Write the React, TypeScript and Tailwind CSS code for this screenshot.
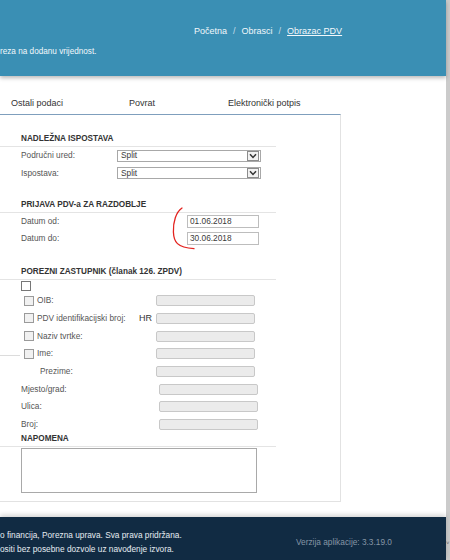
import type { ReactNode } from "react";

function SectionTitle({ children, className = "" }: { children: ReactNode; className?: string }) {
  return (
    <div
      className={`w-[277px] border-b border-[#e4e4e4] pl-[22px] text-[8.2px] font-bold text-[#333] ${className}`}
    >
      {children}
    </div>
  );
}

function SelectBox({ value }: { value: string }) {
  return (
    <div className="flex h-[12px] w-[144px] items-center border border-[#a8a8a8] bg-white pl-[3px] text-[8.3px] leading-none text-[#3a3a3a]">
      <span className="flex-1">{value}</span>
      <span className="mr-px flex h-[10px] w-[12px] items-center justify-center border border-[#8c8c8c] bg-[#f2f2f2]">
        <svg width="8" height="6" viewBox="0 0 8 6">
          <path d="M1 1.2 L4 4.4 L7 1.2" fill="none" stroke="#333" strokeWidth="1.5" />
        </svg>
      </span>
    </div>
  );
}

function TextBox({ value }: { value: string }) {
  return (
    <div className="flex h-[13px] w-[72px] items-center border border-[#bdbdbd] bg-white pl-[2px] text-[8.3px] leading-none text-[#3a3a3a]">
      {value}
    </div>
  );
}

function Disabled({ className = "" }: { className?: string }) {
  return <div className={`h-[11px] w-[99px] rounded-[2px] border border-[#c8c8c8] bg-[#ebebeb] ${className}`} />;
}

function Check({ light = true }: { light?: boolean }) {
  return (
    <span
      className={`block h-[10px] w-[10px] shrink-0 border ${
        light ? "border-[#9a9a9a] bg-[#f1f1f1]" : "border-[#777] bg-white"
      }`}
    />
  );
}

function CheckRow({ label, h, hr = false }: { label: string; h: string; hr?: boolean }) {
  return (
    <div className={`flex items-center pl-[25px] ${h}`}>
      <Check />
      <div className="ml-[3px] flex w-[119px] items-center">
        <span className="flex-1">{label}</span>
        {hr && <span className="mr-[4px] text-[9px] text-[#333]">HR</span>}
      </div>
      <Disabled />
    </div>
  );
}

function PlainRow({ label, h }: { label: string; h: string }) {
  return (
    <div className={`flex items-center pl-[22px] ${h}`}>
      <span className="w-[138px]">{label}</span>
      <Disabled />
    </div>
  );
}

export default function App() {
  return (
    <div className="relative flex h-[560px] w-[450px] overflow-hidden bg-white font-['Liberation_Sans',Arial,sans-serif]">
      <div className="flex w-[446px] flex-col">
        {/* Header */}
        <header className="relative z-10 h-[76px] shrink-0 bg-[#3a8fb4] text-[#f2f8fb] shadow-[0_2px_4px_rgba(0,0,0,0.28)]">
          <nav className="flex items-center gap-[6px] pl-[194px] pt-[25px] text-[9px] leading-[12px]">
            <span>Početna</span>
            <span className="text-[#c5dde9]">/</span>
            <span>Obrasci</span>
            <span className="text-[#c5dde9]">/</span>
            <span className="underline underline-offset-[1px]">Obrazac PDV</span>
          </nav>
          <p className="mt-[9px] text-[8.2px] leading-[12px]">reza na dodanu vrijednost.</p>
        </header>

        {/* Content */}
        <main className="h-[441px] shrink-0 bg-white">
          <div className="flex h-[38px] pl-[11px] pt-[21px] text-[9px] leading-[12px] text-[#333]">
            <span className="w-[118px]">Ostali podaci</span>
            <span className="w-[99px]">Povrat</span>
            <span>Elektronički potpis</span>
          </div>

          <section className="-ml-px h-[388px] w-[342px] border-b border-r border-t border-[#e2e2e2] border-t-[#7f9fbd] text-[8.3px] leading-none text-[#555]">
            <SectionTitle className="mt-[16px] h-[16px] leading-[15px]">NADLEŽNA ISPOSTAVA</SectionTitle>
            <div className="flex h-[17px] items-center pl-[22px]">
              <span className="w-[96px]">Područni ured:</span>
              <SelectBox value="Split" />
            </div>
            <div className="flex h-[18px] items-center pl-[22px]">
              <span className="w-[96px]">Ispostava:</span>
              <SelectBox value="Split" />
            </div>

            <SectionTitle className="mt-[15px] h-[16px] leading-[15px]">PRIJAVA PDV-a ZA RAZDOBLJE</SectionTitle>
            <div className="flex h-[17px] items-center pl-[22px]">
              <span className="w-[166px]">Datum od:</span>
              <TextBox value="01.06.2018" />
            </div>
            <div className="flex h-[17px] items-center pl-[22px]">
              <span className="w-[166px]">Datum do:</span>
              <TextBox value="30.06.2018" />
            </div>

            <SectionTitle className="mt-[17px] h-[16px] leading-[15px]">
              POREZNI ZASTUPNIK (članak 126. ZPDV)
            </SectionTitle>
            <div className="flex h-[12px] items-center pl-[22px]">
              <Check light={false} />
            </div>
            <CheckRow label="OIB:" h="h-[17px]" />
            <CheckRow label="PDV identifikacijski broj:" h="h-[18px]" hr />
            <CheckRow label="Naziv tvrtke:" h="h-[18px]" />
            <CheckRow label="Ime:" h="h-[17px]" />
            <div className="flex h-[18px] items-center pl-[41px]">
              <span className="w-[116px]">Prezime:</span>
              <Disabled />
            </div>
            <PlainRow label="Mjesto/grad:" h="h-[18px]" />
            <PlainRow label="Ulica:" h="h-[17px]" />
            <PlainRow label="Broj:" h="h-[18px]" />

            <SectionTitle className="h-[14px] leading-[11px]">NAPOMENA</SectionTitle>
            <div className="ml-[22px] mt-px h-[45px] w-[236px] border border-[#a9a9a9] bg-white" />
          </section>
        </main>

        {/* Footer */}
        <footer className="relative z-10 flex h-[43px] shrink-0 bg-[#112b43] pt-[11px] text-[8.3px] leading-[14px] shadow-[0_-2px_5px_rgba(0,0,0,0.18)]">
          <div className="w-[296px] text-[#e6ecf2]">
            <p>o financija, Porezna uprava. Sva prava pridržana.</p>
            <p>ositi bez posebne dozvole uz navođenje izvora.</p>
          </div>
          <p className="pt-[7px] text-[#8696a6]">Verzija aplikacije: 3.3.19.0</p>
        </footer>
      </div>

      {/* Scrollbar track */}
      <div className="flex w-[4px] flex-col bg-[#cbcbcb]">
        <div className="flex-1" />
        <span className="mb-[14px] text-[6px] leading-none text-[#666]">˅</span>
      </div>

      {/* faint edge of the side column */}
      <div className="absolute left-0 top-[355px] h-px w-[20px] bg-[#dcdcdc]" />

      {/* red pen mark */}
      <svg className="pointer-events-none absolute left-0 top-0" width="450" height="560">
        <path
          d="M182 208 C176 212 173 222 173.4 232 C173.8 242 177 247.5 194 248.6"
          fill="none"
          stroke="#e3231f"
          strokeWidth="1.3"
          strokeLinecap="round"
        />
      </svg>
    </div>
  );
}
